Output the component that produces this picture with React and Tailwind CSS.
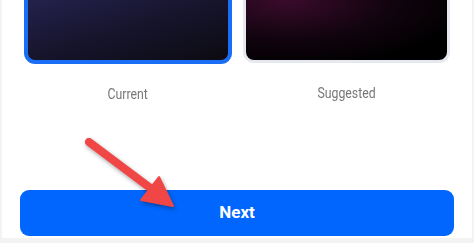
import React from 'react';

// Red callout arrow drawn over the page
const Arrow = () => (
    <svg
        className="absolute left-0 top-0 pointer-events-none drop-shadow-[1px_2px_2px_rgba(0,0,0,0.35)]"
        width="474"
        height="243"
        viewBox="0 0 474 243"
    >
        <line x1="89" y1="142" x2="153" y2="190" stroke="#f04646" strokeWidth="8" strokeLinecap="round" />
        <polygon points="173,206 141,200 159,177" fill="#f04646" stroke="#f04646" strokeWidth="2" strokeLinejoin="round" />
    </svg>
);

const Card = ({ selected, label }) => (
    <div className="flex flex-col items-center">
        <div
            className={
                selected
                    ? 'w-[208px] h-[64px] rounded-b-[11px] border-[4px] border-t-0 border-[#1a6ef5] bg-gradient-to-br from-[#24214d] via-[#16142b] to-[#0c0b12]'
                    : 'w-[207px] h-[63px] rounded-b-[11px] border-[3px] border-t-0 border-[#e6e8f0] bg-[radial-gradient(ellipse_at_20%_0%,#3a0b2c_0%,#12040f_45%,#000_80%)]'
            }
        />
        <div
            className="mt-[21px] text-[15px] leading-[18px] text-[#777] scale-x-[0.82]"
            style={{ fontFamily: 'Roboto, "Liberation Sans", sans-serif' }}
        >
            {label}
        </div>
    </div>
);

export default function App() {
    return (
        <div className="relative w-[474px] h-[243px] overflow-hidden bg-[#f3f3f3]">
            <div className="mx-[2px] h-[238px] bg-white flex flex-col">
                <div className="flex pl-[22px] gap-[11px]">
                    <Card selected label="Current" />
                    <Card label="Suggested" />
                </div>
                <div className="mt-[87px] px-[18px]">
                    <button
                        className="w-full h-[46px] rounded-[9px] bg-[#0066fe] text-white text-[17px] font-bold flex items-center justify-center"
                        style={{ fontFamily: 'Roboto, "Liberation Sans", sans-serif' }}
                    >
                        Next
                    </button>
                </div>
            </div>
            <Arrow />
        </div>
    );
}
